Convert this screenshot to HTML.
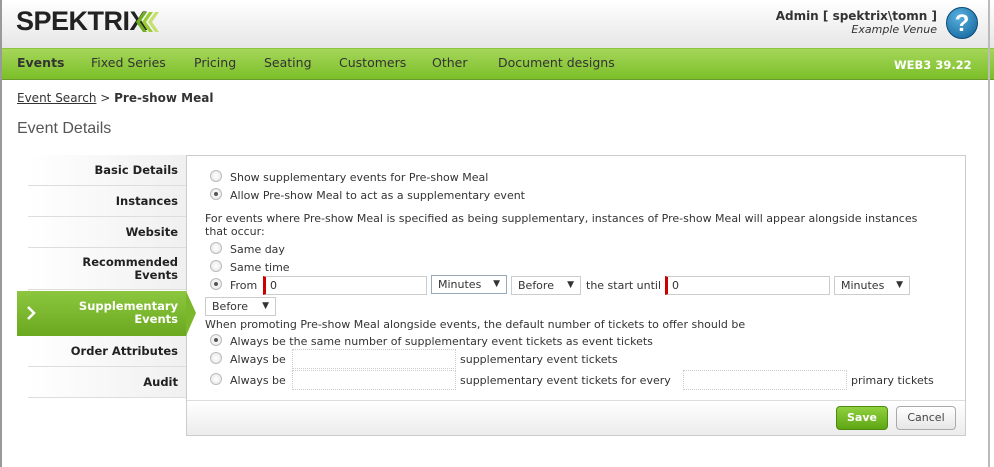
<!DOCTYPE html>
<html><head><style>
*{box-sizing:border-box;margin:0;padding:0}
body{width:994px;height:467px;background:#fff;font-family:"DejaVu Sans","Liberation Sans",sans-serif;font-size:11px;color:#333;position:relative;overflow:hidden}
.abs{position:absolute}
#edge{left:0;top:0;width:990px;height:467px;border-left:2px solid #999;border-right:2px solid #bbb}
#hdr{left:0;top:0;width:994px;height:48px;background:linear-gradient(#fff,#e6e6e6)}
#logo{left:16px;top:6px;font-family:"Liberation Sans",sans-serif;font-weight:bold;font-size:27px;color:#222;letter-spacing:-0.5px}
#nav{left:0;top:48px;width:994px;height:32px;background:linear-gradient(#a5d65a,#7bbf28);border-top:1px solid #8cc63f;border-bottom:1px solid #6a9a30}
.ni{position:absolute;top:7px;font-size:12.5px;color:#333}
.tab{position:absolute;left:28px;width:158px;background:linear-gradient(90deg,#fff,#f0f0f0);border-bottom:1px solid #ddd;text-align:right;padding-right:8px;font-weight:bold;color:#222;font-size:11.5px}
.r{position:absolute;width:12px;height:12px;border-radius:50%;border:1px solid #bbb;background:radial-gradient(#fff,#e4e4e4)}
.r.on::after{content:"";position:absolute;left:3px;top:3px;width:4px;height:4px;border-radius:50%;background:#555}
.t{position:absolute;white-space:nowrap}
.in{position:absolute;height:19px;border:1px solid #ccc;background:#fff;padding-left:4px;line-height:17px}
.sel{position:absolute;height:19px;border:1px solid #ccc;background:#fff;padding-left:6px;line-height:17px}
.sel b{position:absolute;right:6px;top:0;font-size:9px}
.dot{position:absolute;height:20px;border:1px dotted #ccc}
</style></head><body>
<div class="abs" id="hdr"></div>
<div class="abs" id="logo">SPEKTRIX</div>
<svg class="abs" style="left:136px;top:12px" width="24" height="20" viewBox="0 0 24 20"><path d="M7 0 L0 10 L7 20 L11 20 L4 10 L11 0Z" fill="#6fae1f"/><path d="M13 0 L6 10 L13 20 L17 20 L10 10 L17 0Z" fill="#9acd32"/><path d="M19 0 L12 10 L19 20 L23 20 L16 10 L23 0Z" fill="#c4e070"/></svg>
<div class="t" style="right:57px;top:9px;font-weight:bold;font-size:12px">Admin [ spektrix\tomn ]</div>
<div class="t" style="right:57px;top:23px;font-style:italic;font-size:11px">Example Venue</div>
<div class="abs" style="left:946px;top:7px;width:32px;height:32px;border-radius:50%;background:radial-gradient(circle at 40% 30%,#5ab0e0,#0c5f96);color:#fff;font:bold 24px 'Liberation Sans';text-align:center;line-height:32px;border:1px solid #0a4a77">?</div>
<div class="abs" id="nav"></div>
<div class="ni" style="left:17px;top:55px;font-weight:bold">Events</div>
<div class="abs" style="left:33px;top:74px;width:0;height:0;border:6px solid transparent;border-bottom-color:#fff"></div>
<div class="ni" style="left:91px;top:55px">Fixed Series</div>
<div class="ni" style="left:194px;top:55px">Pricing</div>
<div class="ni" style="left:264px;top:55px">Seating</div>
<div class="ni" style="left:339px;top:55px">Customers</div>
<div class="ni" style="left:432px;top:55px">Other</div>
<div class="ni" style="left:498px;top:55px">Document designs</div>
<div class="t" style="left:894px;top:58px;color:#fff;font-weight:bold;font-size:11.5px">WEB3 39.22</div>
<div class="t" style="left:17px;top:91px;font-size:12px"><u>Event Search</u> &gt; <b>Pre-show Meal</b></div>
<div class="t" style="left:17px;top:120px;font-size:16px;color:#555;font-family:'Liberation Sans',sans-serif">Event Details</div>
<div class="abs" style="left:186px;top:155px;width:780px;height:281px;border:1px solid #ccc"></div>
<div class="abs" style="left:187px;top:400px;width:778px;height:35px;background:linear-gradient(#fff,#ececec);border-top:1px solid #ddd"></div>
<div class="abs" style="left:28px;top:155px;width:158px;height:243px;border:1px solid #ddd;border-right:none"></div>
<div class="tab" style="top:155px;height:31px;padding-top:8px">Basic Details</div>
<div class="tab" style="top:186px;height:31px;padding-top:8px">Instances</div>
<div class="tab" style="top:217px;height:31px;padding-top:8px">Website</div>
<div class="tab" style="top:248px;height:42px;padding-top:8px;line-height:13px">Recommended<br>Events</div>
<div class="abs" style="left:17px;top:291px;width:169px;height:45px;background:linear-gradient(#8cc63f,#6aa81f);color:#fff;font-weight:bold;font-size:11.5px;text-align:right;padding:9px 8px 0 0;line-height:13px">Supplementary<br>Events</div>
<div class="abs" style="left:186px;top:291px;width:0;height:0;border-top:22px solid transparent;border-bottom:23px solid transparent;border-left:10px solid #7bb72b"></div>
<svg class="abs" style="left:26px;top:306px" width="10" height="14" viewBox="0 0 10 14"><path d="M2 1 L8 7 L2 13" fill="none" stroke="#fff" stroke-width="2.5"/></svg>
<div class="tab" style="top:336px;height:31px;padding-top:8px">Order Attributes</div>
<div class="tab" style="top:367px;height:31px;padding-top:8px">Audit</div>

<div class="r" style="left:210px;top:170px"></div><div class="t" style="left:230px;top:171px">Show supplementary events for Pre-show Meal</div>
<div class="r on" style="left:210px;top:188px"></div><div class="t" style="left:230px;top:189px">Allow Pre-show Meal to act as a supplementary event</div>
<div class="t" style="left:205px;top:212px;line-height:13px">For events where Pre-show Meal is specified as being supplementary, instances of Pre-show Meal will appear alongside instances<br>that occur:</div>
<div class="r" style="left:210px;top:242px"></div><div class="t" style="left:230px;top:243px">Same day</div>
<div class="r" style="left:210px;top:260px"></div><div class="t" style="left:230px;top:261px">Same time</div>
<div class="r on" style="left:210px;top:278px"></div><div class="t" style="left:230px;top:279px">From</div>
<div class="in" style="left:263px;top:276px;width:164px;border-left:3px solid #c00">0</div>
<div class="sel" style="left:431px;top:275px;width:76px;border-color:#9ab;">Minutes<b>▼</b></div>
<div class="sel" style="left:511px;top:276px;width:70px">Before<b>▼</b></div>
<div class="t" style="left:586px;top:279px">the start until</div>
<div class="in" style="left:665px;top:276px;width:165px;border-left:3px solid #c00">0</div>
<div class="sel" style="left:834px;top:276px;width:76px">Minutes<b>▼</b></div>
<div class="sel" style="left:205px;top:297px;width:71px">Before<b>▼</b></div>
<div class="t" style="left:205px;top:318px">When promoting Pre-show Meal alongside events, the default number of tickets to offer should be</div>
<div class="r on" style="left:210px;top:334px"></div><div class="t" style="left:230px;top:335px">Always be the same number of supplementary event tickets as event tickets</div>
<div class="r" style="left:210px;top:352px"></div><div class="t" style="left:230px;top:353px">Always be</div>
<div class="dot" style="left:292px;top:349px;width:164px"></div><div class="t" style="left:460px;top:353px">supplementary event tickets</div>
<div class="r" style="left:210px;top:373px"></div><div class="t" style="left:230px;top:374px">Always be</div>
<div class="dot" style="left:292px;top:370px;width:164px"></div><div class="t" style="left:460px;top:374px">supplementary event tickets for every</div>
<div class="dot" style="left:683px;top:370px;width:164px"></div><div class="t" style="left:851px;top:374px">primary tickets</div>
<div class="abs" style="left:836px;top:406px;width:52px;height:24px;border-radius:4px;background:linear-gradient(#8fd13f,#5fa614);border:1px solid #4d8a12;color:#fff;font-weight:bold;text-align:center;line-height:22px">Save</div>
<div class="abs" style="left:896px;top:406px;width:60px;height:24px;border-radius:4px;background:linear-gradient(#fff,#e6e6e6);border:1px solid #aaa;color:#444;text-align:center;line-height:22px">Cancel</div>
<div class="abs" id="edge"></div>
</body></html>
